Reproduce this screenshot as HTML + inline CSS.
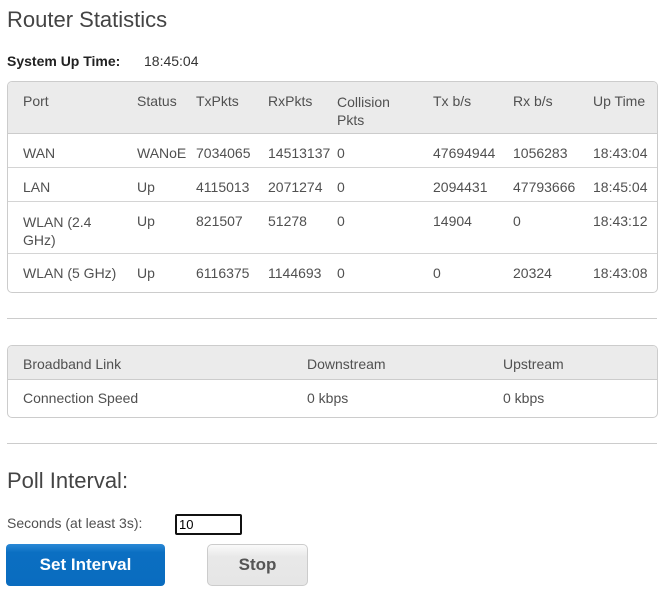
<!DOCTYPE html>
<html><head><style>
body{margin:0;width:666px;height:598px;background:#fff;font-family:"Liberation Sans",sans-serif;color:#505050;font-size:14px;position:relative;overflow:hidden}
.a{position:absolute;white-space:nowrap}
.box{position:absolute;left:7px;width:649px;border:1px solid #ccc;border-radius:5px;overflow:hidden}
.hd{position:absolute;left:0;right:0;top:0;background:#ebebeb;border-bottom:1px solid #ccc}
.ln{position:absolute;left:0;right:0;height:1px;background:#d4d4d4}
hr{position:absolute;left:7px;width:650px;margin:0;border:0;height:1px;background:#ccc}
</style></head><body>
<div class="a" style="left:7px;top:7px;font-size:22px;color:#444">Router Statistics</div>
<div class="a" style="left:7px;top:53px;font-weight:bold;color:#222;font-size:14px">System Up Time:</div>
<div class="a" style="left:144px;top:53px;color:#333">18:45:04</div>

<div class="box" style="top:81px;height:210px">
<div class="hd" style="height:51px"></div>
<div class="ln" style="top:85px"></div>
<div class="ln" style="top:119px"></div>
<div class="ln" style="top:171px"></div>
</div>
<div class="a" style="left:23px;top:93px">Port</div>
<div class="a" style="left:137px;top:93px">Status</div>
<div class="a" style="left:196px;top:93px">TxPkts</div>
<div class="a" style="left:268px;top:93px">RxPkts</div>
<div class="a" style="left:337px;top:93px;line-height:18px">Collision<br>Pkts</div>
<div class="a" style="left:433px;top:93px">Tx b/s</div>
<div class="a" style="left:513px;top:93px">Rx b/s</div>
<div class="a" style="left:593px;top:93px">Up Time</div>

<div class="a" style="left:23px;top:145px">WAN</div><div class="a" style="left:137px;top:145px">WANoE</div><div class="a" style="left:196px;top:145px">7034065</div><div class="a" style="left:268px;top:145px">14513137</div><div class="a" style="left:337px;top:145px">0</div><div class="a" style="left:433px;top:145px">47694944</div><div class="a" style="left:513px;top:145px">1056283</div><div class="a" style="left:593px;top:145px">18:43:04</div>
<div class="a" style="left:23px;top:179px">LAN</div><div class="a" style="left:137px;top:179px">Up</div><div class="a" style="left:196px;top:179px">4115013</div><div class="a" style="left:268px;top:179px">2071274</div><div class="a" style="left:337px;top:179px">0</div><div class="a" style="left:433px;top:179px">2094431</div><div class="a" style="left:513px;top:179px">47793666</div><div class="a" style="left:593px;top:179px">18:45:04</div>
<div class="a" style="left:23px;top:213px;line-height:18px">WLAN (2.4<br>GHz)</div><div class="a" style="left:137px;top:213px">Up</div><div class="a" style="left:196px;top:213px">821507</div><div class="a" style="left:268px;top:213px">51278</div><div class="a" style="left:337px;top:213px">0</div><div class="a" style="left:433px;top:213px">14904</div><div class="a" style="left:513px;top:213px">0</div><div class="a" style="left:593px;top:213px">18:43:12</div>
<div class="a" style="left:23px;top:265px">WLAN (5 GHz)</div><div class="a" style="left:137px;top:265px">Up</div><div class="a" style="left:196px;top:265px">6116375</div><div class="a" style="left:268px;top:265px">1144693</div><div class="a" style="left:337px;top:265px">0</div><div class="a" style="left:433px;top:265px">0</div><div class="a" style="left:513px;top:265px">20324</div><div class="a" style="left:593px;top:265px">18:43:08</div>

<hr style="top:318px">
<div class="box" style="top:345px;height:71px">
<div class="hd" style="height:33px"></div>
</div>
<div class="a" style="left:23px;top:356px">Broadband Link</div><div class="a" style="left:307px;top:356px">Downstream</div><div class="a" style="left:503px;top:356px">Upstream</div>
<div class="a" style="left:23px;top:390px">Connection Speed</div><div class="a" style="left:307px;top:390px">0 kbps</div><div class="a" style="left:503px;top:390px">0 kbps</div>
<hr style="top:443px">

<div class="a" style="left:7px;top:468px;font-size:22px;color:#444">Poll Interval:</div>
<div class="a" style="left:7px;top:515px">Seconds (at least 3s):</div>
<div class="a" style="left:175px;top:514px;width:61px;height:17px;border:2px solid #111;border-radius:2px;font-size:13px;color:#000;line-height:17px;padding-left:2px">10</div>
<div class="a" style="left:6px;top:544px;width:159px;height:42px;background:linear-gradient(#2a88d6,#0b6fc2 20%,#0a6cbf);border-radius:4px;color:#fff;font-weight:bold;font-size:17px;text-align:center;line-height:42px">Set Interval</div>
<div class="a" style="left:207px;top:544px;width:99px;height:40px;background:linear-gradient(#fafafa,#e8e8e8 30%,#e6e6e6);border:1px solid #ccc;border-radius:5px;color:#555;font-weight:bold;font-size:17px;text-align:center;line-height:40px">Stop</div>
</body></html>
